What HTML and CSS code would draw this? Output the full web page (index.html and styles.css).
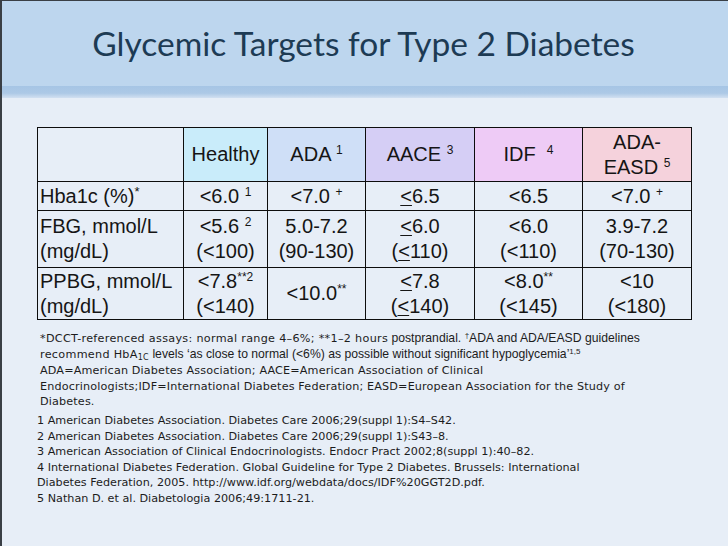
FILE: index.html
```html
<!DOCTYPE html>
<html lang="en">
<head>
<meta charset="utf-8">
<title>Glycemic Targets for Type 2 Diabetes</title>
<link rel="stylesheet" href="styles.css">
</head>
<body>
<div class="slide">
  <header class="band">
    <h1 class="title">Glycemic Targets for Type 2 Diabetes</h1>
  </header>
  <div class="stripe"></div>
  <main class="content">
    <table class="targets">
      <colgroup>
        <col class="c-label"><col class="c-healthy"><col class="c-ada"><col class="c-aace"><col class="c-idf"><col class="c-easd">
      </colgroup>
      <thead>
        <tr class="row-head">
          <th class="h-empty"></th>
          <th class="h-healthy">Healthy</th>
          <th class="h-ada">ADA <sup>1</sup></th>
          <th class="h-aace">AACE <sup>3</sup></th>
          <th class="h-idf">IDF &nbsp;<sup>4</sup></th>
          <th class="h-easd">ADA-<br>EASD <sup>5</sup></th>
        </tr>
      </thead>
      <tbody>
        <tr class="row-a1c">
          <td class="label">Hba1c (%)<sup class="ast">*</sup></td>
          <td>&lt;6.0 <sup>1</sup></td>
          <td>&lt;7.0 <sup>+</sup></td>
          <td><u>&lt;</u>6.5</td>
          <td>&lt;6.5</td>
          <td>&lt;7.0 <sup>+</sup></td>
        </tr>
        <tr class="row-fbg">
          <td class="label">FBG, mmol/L<br>(mg/dL)</td>
          <td>&lt;5.6 <sup>2</sup><br>(&lt;100)</td>
          <td>5.0-7.2<br>(90-130)</td>
          <td><u>&lt;</u>6.0<br>(<u>&lt;</u>110)</td>
          <td>&lt;6.0<br>(&lt;110)</td>
          <td>3.9-7.2<br>(70-130)</td>
        </tr>
        <tr class="row-ppbg">
          <td class="label">PPBG, mmol/L<br>(mg/dL)</td>
          <td>&lt;7.8<sup>**2</sup><br>(&lt;140)</td>
          <td>&lt;10.0<sup>**</sup></td>
          <td><u>&lt;</u>7.8<br>(<u>&lt;</u>140)</td>
          <td>&lt;8.0<sup>**</sup><br>(&lt;145)</td>
          <td>&lt;10<br>(&lt;180)</td>
        </tr>
      </tbody>
    </table>

    <p class="note note-first"><span class="dv">*DCCT-referenced assays: normal range 4–6%; **1–2 hours</span> postprandial. <sup class="tiny">†</sup>ADA and ADA/EASD guidelines<br><span class="dv">recommend HbA<sub>1C</sub></span> levels ‘as close to normal (&lt;6%) as possible without significant hypoglycemia’<sup class="tiny">1,5</sup></p>
    <p class="note note-abbr">ADA=American Diabetes Association; AACE=American Association of Clinical<br>Endocrinologists;IDF=International Diabetes Federation; EASD=European Association for the Study of<br>Diabetes.</p>

    <ol class="refs">
      <li>1 American Diabetes Association. Diabetes Care 2006;29(suppl 1):S4–S42.</li>
      <li>2 American Diabetes Association. Diabetes Care 2006;29(suppl 1):S43–8.</li>
      <li>3 American Association of Clinical Endocrinologists. Endocr Pract 2002;8(suppl 1):40–82.</li>
      <li>4 International Diabetes Federation. Global Guideline for Type 2 Diabetes. Brussels: International<br>Diabetes Federation, 2005. http://www.idf.org/webdata/docs/IDF%20GGT2D.pdf.</li>
      <li>5 Nathan D. et al. Diabetologia 2006;49:1711-21.</li>
    </ol>
  </main>
</div>
</body>
</html>
```
FILE: styles.css
```css
html, body {
  margin: 0;
  padding: 0;
}

body {
  width: 728px;
  height: 546px;
  overflow: hidden;
  background: #e7eef7;
}

.slide {
  box-sizing: border-box;
  width: 728px;
  height: 546px;
  border-left: 2px solid #3a3f45;
  border-top: 1px solid #3a3f45;
  background: #e7eef7;
  display: flex;
  flex-direction: column;
}

.band {
  height: 85px;
  background: #bdd6ee;
  display: flex;
  align-items: center;
  justify-content: center;
}

.title {
  margin: 0 3px 0 0;
  padding-bottom: 2px;
  font-family: Lato, "Open Sans", sans-serif;
  font-weight: 400;
  font-size: 33.5px;
  color: #1d3b54;
  letter-spacing: 0;
}

.stripe {
  height: 12px;
  background: linear-gradient(#a6c5e5, #adc9e6 60%, #d2e0f1);
}

.content {
  padding: 29px 0 0 35px;
}

.targets {
  border-collapse: collapse;
  table-layout: fixed;
  width: 654px;
  font-family: "Liberation Sans", Arial, sans-serif;
  font-size: 20px;
  line-height: 25px;
  color: #151515;
}

.c-label { width: 146px; }
.c-healthy { width: 84px; }
.c-ada { width: 98px; }
.c-aace { width: 109px; }
.c-idf { width: 108px; }
.c-easd { width: 109px; }

.targets th,
.targets td {
  border: 1px solid #0d0d0d;
  padding: 0 2px;
  text-align: center;
  vertical-align: middle;
  font-weight: 400;
}

.targets td.label {
  text-align: left;
}

.row-head { height: 54px; }
.row-a1c { height: 29px; }
.row-fbg { height: 57px; }
.row-ppbg { height: 52px; }

.h-healthy { background: #c9ecfa; }
.h-ada { background: #cfdff7; }
.h-aace { background: #d5cef5; }
.h-idf { background: #eecbf6; }
.h-easd { background: #f5d2dc; }

.targets sup {
  font-size: 12px;
  line-height: 0;
  vertical-align: 7px;
}

.targets sup.ast {
  font-size: 13px;
}

.targets u {
  text-decoration-thickness: 1px;
  text-underline-offset: 2px;
}

.note {
  margin: 0;
  padding-left: 3px;
  font-family: "Liberation Sans", Arial, sans-serif;
  font-size: 12.2px;
  line-height: 15.6px;
  color: #1c1c1c;
}

.note .dv,
.note-abbr {
  font-family: "DejaVu Sans", Verdana, sans-serif;
  font-size: 11.2px;
}

.note .dv {
  letter-spacing: 0.3px;
}

.note-abbr {
  letter-spacing: 0.15px;
}

.note-first {
  margin-top: 11px;
}

.note-abbr {
  margin-top: 1px;
}

.note sub {
  font-size: 8px;
  line-height: 0;
  vertical-align: -2px;
}

.note sup.tiny {
  font-size: 8px;
  line-height: 0;
  vertical-align: 4px;
}

.refs {
  list-style: none;
  margin: 3px 0 0 0;
  padding: 0;
  font-family: "DejaVu Sans", Verdana, sans-serif;
  font-size: 11.2px;
  line-height: 15.6px;
  color: #1c1c1c;
}
```
